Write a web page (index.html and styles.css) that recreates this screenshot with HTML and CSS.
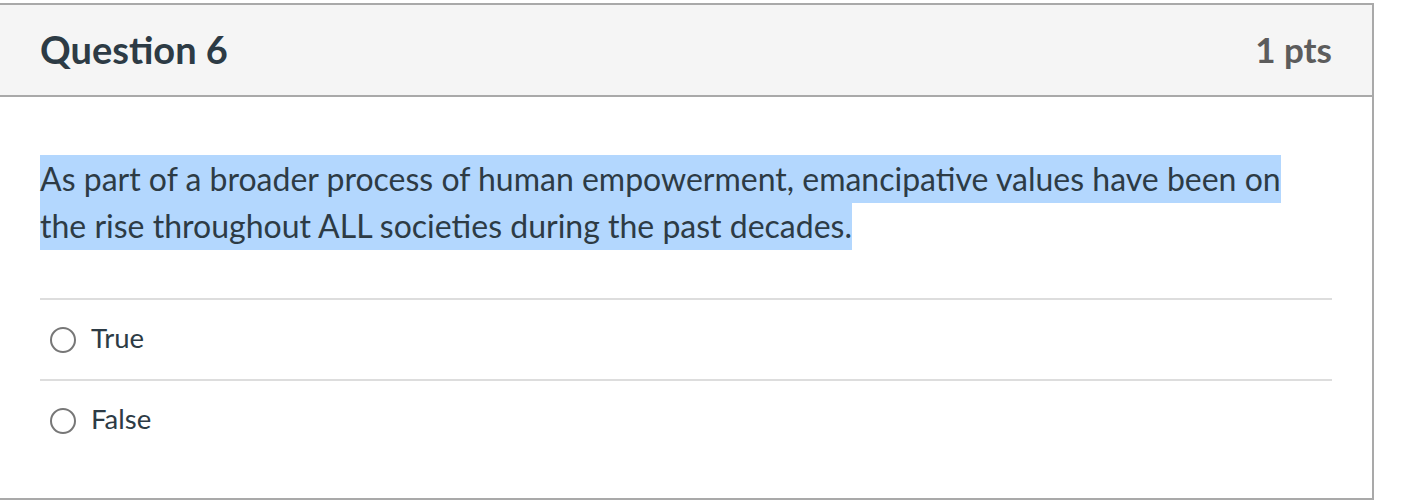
FILE: index.html
```html
<!DOCTYPE html>
<html lang="en">
<head>
<meta charset="utf-8">
<title>Question 6</title>
<link rel="stylesheet" href="styles.css">
</head>
<body>
<div class="question">
  <div class="header">
    <h2 class="name">Question 6</h2>
    <span class="points">1 pts</span>
  </div>
  <div class="content">
    <p class="text"><span class="selected">As part of a broader process of human empowerment, emancipative values have been on the rise throughout ALL societies during the past decades.</span></p>
    <div class="answers">
      <label class="answer"><span class="radio"></span><span class="label">True</span></label>
      <label class="answer"><span class="radio"></span><span class="label">False</span></label>
    </div>
  </div>
</div>
</body>
</html>
```
FILE: styles.css
```css
html, body {
  margin: 0;
  padding: 0;
  background: #ffffff;
}
body {
  font-family: Lato, "Liberation Sans", sans-serif;
  color: #2d3b45;
}
.question {
  margin-top: 3px;
  width: 1374px;
  height: 497px;
  box-sizing: border-box;
  border-top: 2px solid #a9a9a9;
  border-right: 2px solid #a9a9a9;
  border-bottom: 2px solid #a9a9a9;
}
.header {
  display: flex;
  align-items: center;
  justify-content: space-between;
  height: 90px;
  padding: 0 40px;
  background: #f5f5f5;
  border-bottom: 2px solid #a9a9a9;
}
.name {
  margin: 0;
  font-size: 38px;
  font-weight: 700;
  color: #2d3b45;
  padding-bottom: 2px;
}
.points {
  font-size: 35px;
  font-weight: 700;
  color: #5c5c5c;
  padding-bottom: 2px;
}
.content {
  padding: 58px 40px 0 40px;
}
.text {
  margin: 0;
  font-size: 32px;
  line-height: 47px;
}
.selected {
  background: #b3d7fe;
  padding: 4px 0 5px 0;
}
.answers {
  margin-top: 49px;
}
.answer {
  display: flex;
  align-items: center;
  height: 79px;
  border-top: 2px solid #dddddd;
}
.radio {
  width: 22px;
  height: 22px;
  border: 2px solid #777777;
  border-radius: 50%;
  margin-left: 10px;
  margin-right: 15px;
  flex: none;
}
.label {
  font-size: 27.5px;
  color: #2d3b45;
  padding-bottom: 4px;
}
```
